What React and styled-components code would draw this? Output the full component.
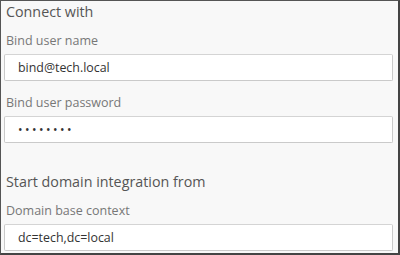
import React from "react";
import styled, { createGlobalStyle } from "styled-components";

const Global = createGlobalStyle`
  html, body { margin: 0; padding: 0; background: #fff; }
  * { box-sizing: border-box; }
`;

const Panel = styled.div`
  width: 400px;
  height: 255px;
  background: #f8f8f8;
  border-top: 1px solid #555;
  border-left: 1px solid #555;
  border-right: 2px solid #444;
  border-bottom: 2px solid #444;
  padding: 0 5px 0 3px;
  font-family: "Open Sans", "DejaVu Sans", sans-serif;
  display: flex;
  flex-direction: column;
  overflow: hidden;
`;

const Section = styled.section`
  display: flex;
  flex-direction: column;
  margin-top: ${(p) => p.$top}px;
`;

const Heading = styled.div`
  font-size: 14.3px;
  line-height: 20px;
  color: #555;
  padding-left: 2px;
`;

const Label = styled.label`
  font-size: 12.5px;
  line-height: 16px;
  color: #777;
  padding-left: 2px;
  margin-top: ${(p) => p.$top}px;
`;

const Field = styled.div`
  height: 27px;
  margin-top: 5px;
  background: #fff;
  border: 1px solid #cacaca;
  border-top-color: #d4d4d4;
  border-radius: 2px;
  display: flex;
  align-items: center;
  padding-left: 13px;
  font-size: 12.4px;
  color: #333;
`;

const Dots = styled.span`
  letter-spacing: 2.5px;
  font-size: 12px;
  color: #333;
`;

export default function App() {
  return (
    <>
      <Global />
      <Panel>
        <Section $top={1}>
          <Heading>Connect with</Heading>
          <Label $top={11}>Bind user name</Label>
          <Field>bind@tech.local</Field>
          <Label $top={14}>Bind user password</Label>
          <Field>
            <Dots>••••••••</Dots>
          </Field>
        </Section>
        <Section $top={29}>
          <Heading>Start domain integration from</Heading>
          <Label $top={11}>Domain base context</Label>
          <Field>dc=tech,dc=local</Field>
        </Section>
      </Panel>
    </>
  );
}
